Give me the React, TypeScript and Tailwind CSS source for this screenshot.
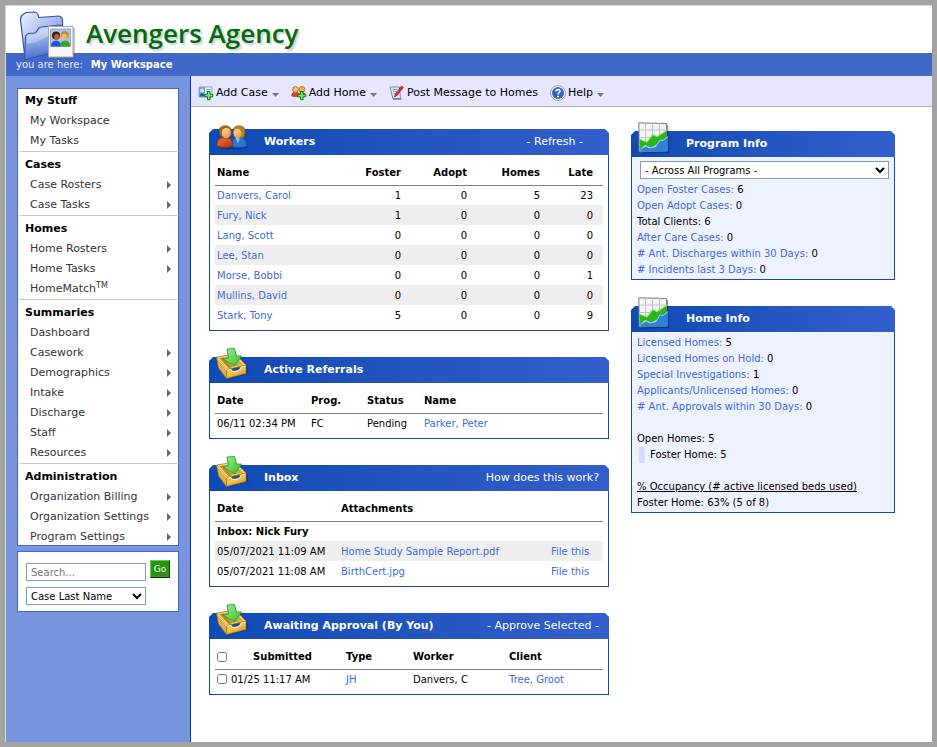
import { useState, type ReactNode } from "react";

const menu = [
  {
    title: "My Stuff",
    items: [{ label: "My Workspace" }, { label: "My Tasks" }],
  },
  {
    title: "Cases",
    items: [
      { label: "Case Rosters", sub: true },
      { label: "Case Tasks", sub: true },
    ],
  },
  {
    title: "Homes",
    items: [
      { label: "Home Rosters", sub: true },
      { label: "Home Tasks", sub: true },
      { label: "HomeMatch", tm: true },
    ],
  },
  {
    title: "Summaries",
    items: [
      { label: "Dashboard" },
      { label: "Casework", sub: true },
      { label: "Demographics", sub: true },
      { label: "Intake", sub: true },
      { label: "Discharge", sub: true },
      { label: "Staff", sub: true },
      { label: "Resources", sub: true },
    ],
  },
  {
    title: "Administration",
    items: [
      { label: "Organization Billing", sub: true },
      { label: "Organization Settings", sub: true },
      { label: "Program Settings", sub: true },
    ],
  },
] as { title: string; items: { label: string; sub?: boolean; tm?: boolean }[] }[];

const workers: [string, number, number, number, number][] = [
  ["Danvers, Carol", 1, 0, 5, 23],
  ["Fury, Nick", 1, 0, 0, 0],
  ["Lang, Scott", 0, 0, 0, 0],
  ["Lee, Stan", 0, 0, 0, 0],
  ["Morse, Bobbi", 0, 0, 0, 1],
  ["Mullins, David", 0, 0, 0, 0],
  ["Stark, Tony", 5, 0, 0, 9],
];

function FolderLogo() {
  return (
    <svg width="60" height="52" viewBox="0 0 60 52" className="block">
      <defs>
        <linearGradient id="folderBack" x1="0" y1="0" x2="1" y2="1">
          <stop offset="0" stopColor="#eef3ff" />
          <stop offset="1" stopColor="#5f80d4" />
        </linearGradient>
        <linearGradient id="folderFront" x1="0.3" y1="0" x2="0.5" y2="1">
          <stop offset="0" stopColor="#cfdcfa" />
          <stop offset="0.5" stopColor="#85a2e6" />
          <stop offset="1" stopColor="#4067cc" />
        </linearGradient>
      </defs>
      <path
        d="M6 47 L1.500 9 Q1.500 5 4 3.500 L7 1.500 L16 1 Q18.500 1.200 20 6.500 L40 5 Q43.500 6 43.500 9 L44 40 Z"
        fill="url(#folderBack)"
        stroke="#3a4f9e"
        strokeWidth="1.200"
        strokeLinejoin="round"
      />
      <path
        d="M5.500 47 L6.500 26 Q7 22.800 9.500 22.500 L15.500 22 Q17.500 21.500 18.500 19 Q19.500 16.500 22 16 L41 14 Q43.500 14.500 43.500 17 L43.500 39 L9 48 Q6 49 5.500 47 Z"
        fill="url(#folderFront)"
        stroke="#3a55ad"
        strokeWidth="1.200"
        strokeLinejoin="round"
      />
      <path d="M8 33 Q24 31 38 18 L38 15.500 L22.500 17.500 L17.500 23.500 L8 24.500 Z" fill="#fff" opacity="0.3" />
      <path d="M31 17 H56 V48 H31 Z" fill="#555" opacity="0.35" />
      <path d="M29.500 15.500 H54 V46 H29.500 Z" fill="#f7f7f7" stroke="#a8a8a8" />
      <path d="M31.500 18 H51.500 V35.500 H31.500 Z" fill="#a9c6f2" stroke="#8d9bb5" strokeWidth="0.800" />
      <circle cx="37" cy="24.500" r="4" fill="#3b1d12" />
      <ellipse cx="37.700" cy="26" rx="2.600" ry="3" fill="#c4601f" />
      <path d="M32 35.500 Q32 29.500 37 29.500 Q42 29.500 42 35.500 Z" fill="#2456d6" />
      <circle cx="45.800" cy="24" r="3.900" fill="#c08d1c" />
      <ellipse cx="45.300" cy="25.800" rx="2.700" ry="3" fill="#f0b878" />
      <path d="M41 35.500 Q41 29.500 46 29.500 Q51.300 29.500 51.300 35.500 Z" fill="#38a822" />
    </svg>
  );
}

function PeopleIcon() {
  return (
    <svg width="32" height="25" viewBox="0 0 32 25" className="block">
      <defs>
        <linearGradient id="face" x1="0" y1="0" x2="0.6" y2="1">
          <stop offset="0" stopColor="#ffdca0" />
          <stop offset="1" stopColor="#e89a4e" />
        </linearGradient>
        <linearGradient id="redShirt" x1="0" y1="0" x2="1" y2="1">
          <stop offset="0" stopColor="#f4743f" />
          <stop offset="1" stopColor="#b92f10" />
        </linearGradient>
      </defs>
      <ellipse cx="17" cy="22" rx="15" ry="2.500" fill="#00194f" opacity="0.4" />
      <path d="M16 17 Q17 12.500 23 12.500 Q30.500 12.500 30.500 20 Q30.500 22.500 23 22.500 Q17 22.500 16 21 Z" fill="#2a78cc" stroke="#17519a" strokeWidth="0.800" />
      <path d="M19.500 13 L22 18.500 L24 13 Z" fill="#8fc0f0" />
      <path d="M17 7 Q17 0.800 23 0.800 Q29.500 1 29 7 Q29 12 26.500 13 Q19 14 17 7 Z" fill="#b5831f" stroke="#7d5a10" strokeWidth="0.700" />
      <ellipse cx="21.500" cy="8.500" rx="4" ry="4.700" fill="url(#face)" />
      <path d="M0.800 19.500 Q1 12.500 9 12.300 Q16.400 12.500 16.600 19.500 Q16.500 22.500 9 22.500 Q1 22.500 0.800 19.500 Z" fill="url(#redShirt)" stroke="#9c2d10" strokeWidth="0.800" />
      <path d="M3 7 Q3.200 0.800 9.500 0.700 Q15.500 1 15.500 7 Q15 13 10 13.300 Q4 13 3 7 Z" fill="#ad6420" stroke="#7d4610" strokeWidth="0.700" />
      <ellipse cx="10.300" cy="8" rx="4.500" ry="5.200" fill="url(#face)" />
    </svg>
  );
}

function InboxIcon() {
  return (
    <svg width="33" height="32" viewBox="0 0 33 32" className="block">
      <defs>
        <linearGradient id="tray" x1="0" y1="0" x2="0.6" y2="1">
          <stop offset="0" stopColor="#f3cd58" />
          <stop offset="0.6" stopColor="#efc654" />
          <stop offset="1" stopColor="#c8921e" />
        </linearGradient>
        <linearGradient id="arrowDown" x1="0" y1="0" x2="1" y2="1">
          <stop offset="0" stopColor="#a4f592" />
          <stop offset="1" stopColor="#2fbb2c" />
        </linearGradient>
      </defs>
      <path d="M11 31.500 L32.500 26 L31 17 L12 27 Z" fill="#00194f" opacity="0.4" />
      <path d="M0.500 9 L19 6 L30 17 L11 21.500 Z" fill="#f5d97c" stroke="#a37a1c" strokeWidth="0.700" strokeLinejoin="round" />
      <path d="M3.500 10 L18 7.500 L27 16.500 L12.500 20 Z" fill="#d8a838" />
      <path d="M3.500 10 L7 9.500 L16 19.200 L12.500 20 Z" fill="#b78a28" />
      <path d="M0.500 9 L11 21.500 L10.500 30.500 L2.500 20 Z" fill="#e0b040" stroke="#a37415" strokeWidth="0.700" strokeLinejoin="round" />
      <path d="M11 21.500 L15 20.500 Q16 23.500 19 22.800 L22 22 Q24 21.500 24.500 18.300 L30 17 L30 25.500 L10.500 30.500 Z" fill="url(#tray)" stroke="#a37415" strokeWidth="0.700" strokeLinejoin="round" />
      <path d="M1.500 10.500 L11.300 22.300 L14.500 21.500 Q16 24.300 19 23.700 L22.300 22.800 Q24.700 22 25.200 19 L29.500 18" fill="none" stroke="#fff2bd" strokeWidth="0.900" />
      <path d="M11 1 L18.500 0.600 L20.500 8 L25.500 8 L18.500 18 L7 11 L12.500 9.800 Z" fill="url(#arrowDown)" stroke="#2c9e30" strokeWidth="0.900" strokeLinejoin="round" />
    </svg>
  );
}

function ChartIcon() {
  return (
    <svg width="33" height="32" viewBox="0 0 33 32" className="block">
      <path d="M3 3 L30 3 L31.500 31 L3 31.500 Z" fill="#0a1c4c" opacity="0.45" />
      <path d="M0.800 0.800 L28.500 1.500 L28.500 29 L1.200 29.800 Z" fill="#f4f4f8" stroke="#77788a" />
      <path d="M7.500 1 V29 M14.500 1 V29 M21.500 1 V29 M1 8 H29 M1 15.500 H29 M1 22.500 H29" stroke="#bcbcca" strokeWidth="0.900" />
      <path d="M1.500 17 L9 20 L14.500 12.500 L19 14.500 L28.500 8.500 L28.800 20 L20 22 L13 26 L7 23 L2 28.500 Z" fill="#2fb51c" />
      <path d="M1.500 17 L9 20 L14.500 12.500 L19 14.500 L28.500 8.500" fill="none" stroke="#8bea6a" strokeWidth="1.300" />
      <path d="M2 29.500 L3 27 L8 24 L12 26 L18 24.500 L22 18 L25 18.500 L30 14.500 L30 29.500 Z" fill="#2f80da" />
      <path d="M3 27 L8 24 L12 26 L18 24.500 L22 18 L25 18.500 L30 14.500" fill="none" stroke="#9cd0ff" strokeWidth="1" />
    </svg>
  );
}

function Plus() {
  return <path d="M9.500 6.500 h2.500 v2.800 h2.800 v2.500 h-2.800 v2.900 h-2.500 v-2.900 h-2.800 v-2.500 h2.800 Z" fill="#7ee86c" stroke="#0b7a12" strokeWidth="1" />;
}

function AddCaseIcon() {
  return (
    <svg width="16" height="16" viewBox="0 0 16 16">
      <path d="M1 2 H14 V12 H1 Z" fill="#eaf5ff" stroke="#7ea9cf" />
      <path d="M1 2 H7 V12 H1 Z" fill="#5aaae8" />
      <circle cx="4" cy="5.500" r="2" fill="#ffd7a0" />
      <path d="M1.500 11.500 Q2 8 4 8 Q6 8 6.500 11.500 Z" fill="#1b5cab" />
      <path d="M8.500 4.500 H12.500 M8.500 6.500 H12" stroke="#7ea9cf" />
      <Plus />
    </svg>
  );
}

function AddHomeIcon() {
  return (
    <svg width="16" height="16" viewBox="0 0 16 16">
      <path d="M7 11.500 Q8 7 11 7 Q14.500 7.500 14.500 11.500 Z" fill="#e8762b" stroke="#b5561d" strokeWidth="0.600" />
      <circle cx="11" cy="4.500" r="2.900" fill="#f3b166" stroke="#b8701b" strokeWidth="0.900" />
      <path d="M0.500 11 Q0.800 7 4.500 7 Q8.500 7 8.500 11 Q5 12.500 0.500 11 Z" fill="#dd4a22" stroke="#a83412" strokeWidth="0.600" />
      <circle cx="4.500" cy="4.500" r="2.900" fill="#f8bd7c" stroke="#c0661d" strokeWidth="0.900" />
      <Plus />
    </svg>
  );
}

function PostIcon() {
  return (
    <svg width="16" height="16" viewBox="0 0 16 16">
      <path d="M1 2 L10.500 2 L11.500 13.500 L4 14 Z" fill="#dbe8f5" stroke="#6c8db0" />
      <path d="M3.500 4.500 H8.500 M4 6.500 H8 M4.500 8.500 H7" stroke="#7f9fc0" strokeWidth="0.900" />
      <path d="M12.500 1 L14.500 2.500 L8 10.500 L5.500 12 L6.300 9.300 Z" fill="#e8321e" stroke="#8e1b10" strokeWidth="0.600" />
      <path d="M4 14 H12.500" stroke="#44627f" />
    </svg>
  );
}

function HelpIcon() {
  return (
    <svg width="16" height="16" viewBox="0 0 16 16">
      <circle cx="8" cy="8" r="7.400" fill="#fff" stroke="#8795b0" strokeWidth="0.900" />
      <circle cx="8" cy="8" r="6" fill="#2f62c9" />
      <path d="M5.900 6.500 Q6 4.400 8.100 4.400 Q10.200 4.500 10.100 6.200 Q10 7.300 8.700 8 Q8 8.500 8 9.500" fill="none" stroke="#fff" strokeWidth="1.500" />
      <circle cx="8" cy="11.600" r="1" fill="#fff" />
    </svg>
  );
}

function ToolbarButton({ icon, label, menu }: { icon: ReactNode; label: string; menu?: boolean }) {
  return (
    <button className="flex items-center gap-0.5">
      {icon}
      <span className="pt-0.5">{label}</span>
      {menu && (
        <svg width="7" height="4" viewBox="0 0 7 4" className="mt-1 ml-0.5">
          <path d="M0 0 H7 L3.500 4 Z" fill="#777" />
        </svg>
      )}
    </button>
  );
}

function A({ children }: { children: ReactNode }) {
  return (
    <a href="#" className="text-[#4169e1]">
      {children}
    </a>
  );
}

function Panel({
  title,
  icon,
  action,
  children,
}: {
  title: string;
  icon: ReactNode;
  action?: ReactNode;
  children: ReactNode;
}) {
  return (
    <section className="relative">
      <div className="flex h-[26px] items-center justify-between bg-linear-to-r from-[#0f4ab4] to-[#325fcc] pt-px pl-[55px] pr-[10px] text-[11px] text-white [clip-path:polygon(0_4px,4px_0,calc(100%-4px)_0,100%_4px,100%_100%,0_100%)]">
        <h2 className="font-bold">{title}</h2>
        {action}
      </div>
      <div className="absolute -top-[9px] left-[7px]">{icon}</div>
      {children}
    </section>
  );
}

const tableBox = "border border-t-0 border-[#0f4ab4] px-[5px] pt-[6px] pb-[5px]";
const table =
  "w-full table-fixed border-collapse text-left [&_td]:h-5 [&_td]:px-0.5 [&_td]:py-0 [&_th]:h-6 [&_th]:px-0.5 [&_th]:py-0 [&_thead]:border-b [&_thead]:border-[#808080]";
const infoBox = "border border-t-0 border-[#0f4ab4] bg-[#eef2fe] px-[5px] pt-[3px] pb-px leading-4";

function Sidebar() {
  return (
    <aside className="w-[185px] shrink-0 border-r border-[#0b319c] bg-[#7695de] px-[11px] pt-3">
      <nav className="border border-[#4169ca] bg-white px-px">
        {menu.map((section) => (
          <div
            key={section.title}
            className="border-b border-[#ccc] pt-[3px] text-[11px] leading-5 first:pt-0.5 last:-mb-0.5 last:border-b-0"
          >
            <h3 className="pl-[6px] font-bold">{section.title}</h3>
            <ul>
              {section.items.map((item) => (
                <li key={item.label}>
                  <a href="#" className="flex h-5 items-center justify-between pl-[11px] pr-[6px] text-[#333]">
                    <span>
                      {item.label}
                      {item.tm && <sup className="text-[8px] leading-none">TM</sup>}
                    </span>
                    {item.sub && (
                      <svg width="4" height="8" viewBox="0 0 4 8">
                        <path d="M0 0 L4 4 L0 8 Z" fill="#666" />
                      </svg>
                    )}
                  </a>
                </li>
              ))}
            </ul>
          </div>
        ))}
      </nav>
      <form
        className="mt-[5px] border border-[#4169ca] bg-white px-2 pt-2 pb-[6px] text-[10px]"
        onSubmit={(e) => e.preventDefault()}
      >
        <div className="flex items-start gap-1">
          <input
            type="text"
            aria-label="Search"
            placeholder="Search..."
            className="mt-[3px] h-[18px] w-[120px] border border-[#7f9db9] px-1 placeholder:text-[#757575]"
          />
          <button className="h-[18px] w-[21px] border border-t-[#5fd04a] border-l-[#5fd04a] border-r-[#073d00] border-b-[#073d00] bg-[#2b9212] text-[9px] leading-none text-white">
            Go
          </button>
        </div>
        <select aria-label="Search by" className="mt-[6px] block h-[18px] w-[120px] border border-[#7f9db9] bg-white">
          <option>Case Last Name</option>
          <option>Case First Name</option>
        </select>
      </form>
    </aside>
  );
}

function Workers() {
  return (
    <Panel
      title="Workers"
      icon={<div className="pt-[5px]"><PeopleIcon /></div>}
      action={<a href="#" className="pr-4">- Refresh -</a>}
    >
      <div className={tableBox}>
        <table className={table}>
          <colgroup>
            <col />
            <col className="w-[60px]" />
            <col className="w-[66px]" />
            <col className="w-[73px]" />
            <col className="w-[61px]" />
          </colgroup>
          <thead>
            <tr>
              <th>Name</th>
              <th className="text-right">Foster</th>
              <th className="text-right">Adopt</th>
              <th className="text-right">Homes</th>
              <th className="text-right">
                <span className="pr-2">Late</span>
              </th>
            </tr>
          </thead>
          <tbody>
            {workers.map(([name, foster, adopt, homes, late]) => (
              <tr key={name} className="even:bg-[#eee]">
                <td>
                  <A>{name}</A>
                </td>
                <td className="text-right">{foster}</td>
                <td className="text-right">{adopt}</td>
                <td className="text-right">{homes}</td>
                <td className="text-right">
                  <span className="pr-2">{late}</span>
                </td>
              </tr>
            ))}
          </tbody>
        </table>
      </div>
    </Panel>
  );
}

function Referrals() {
  return (
    <Panel title="Active Referrals" icon={<InboxIcon />}>
      <div className={tableBox}>
        <table className={table}>
          <colgroup>
            <col className="w-[94px]" />
            <col className="w-[56px]" />
            <col className="w-[57px]" />
            <col />
          </colgroup>
          <thead>
            <tr>
              <th>Date</th>
              <th>Prog.</th>
              <th>Status</th>
              <th>Name</th>
            </tr>
          </thead>
          <tbody>
            <tr>
              <td className="whitespace-nowrap">06/11 02:34 PM</td>
              <td>FC</td>
              <td>Pending</td>
              <td>
                <A>Parker, Peter</A>
              </td>
            </tr>
          </tbody>
        </table>
      </div>
    </Panel>
  );
}

function Inbox() {
  return (
    <Panel title="Inbox" icon={<InboxIcon />} action={<a href="#">How does this work?</a>}>
      <div className={tableBox}>
        <table className={table}>
          <colgroup>
            <col className="w-[124px]" />
            <col />
            <col className="w-[54px]" />
          </colgroup>
          <thead>
            <tr>
              <th>Date</th>
              <th>Attachments</th>
              <th></th>
            </tr>
          </thead>
          <tbody>
            <tr>
              <td colSpan={3} className="font-bold">
                Inbox: Nick Fury
              </td>
            </tr>
            <tr className="bg-[#eee]">
              <td className="whitespace-nowrap">05/07/2021 11:09 AM</td>
              <td>
                <A>Home Study Sample Report.pdf</A>
              </td>
              <td>
                <A>File this</A>
              </td>
            </tr>
            <tr>
              <td className="whitespace-nowrap">05/07/2021 11:08 AM</td>
              <td>
                <A>BirthCert.jpg</A>
              </td>
              <td>
                <A>File this</A>
              </td>
            </tr>
          </tbody>
        </table>
      </div>
    </Panel>
  );
}

function Approvals() {
  const [checked, setChecked] = useState(false);
  return (
    <Panel
      title="Awaiting Approval (By You)"
      icon={<InboxIcon />}
      action={<a href="#">- Approve Selected -</a>}
    >
      <div className={tableBox}>
        <table className={table}>
          <colgroup>
            <col className="w-[14px]" />
            <col className="w-[115px]" />
            <col className="w-[67px]" />
            <col className="w-[96px]" />
            <col />
          </colgroup>
          <thead>
            <tr>
              <th>
                <input
                  type="checkbox"
                  aria-label="Select all"
                  className="block size-[10px]"
                  checked={checked}
                  onChange={() => setChecked(!checked)}
                />
              </th>
              <th>
                <span className="block pr-2 text-center">Submitted</span>
              </th>
              <th>Type</th>
              <th>Worker</th>
              <th>Client</th>
            </tr>
          </thead>
          <tbody>
            <tr>
              <td>
                <input
                  type="checkbox"
                  aria-label="Select Tree, Groot"
                  className="block size-[10px]"
                  checked={checked}
                  onChange={() => setChecked(!checked)}
                />
              </td>
              <td>01/25 11:17 AM</td>
              <td>
                <A>JH</A>
              </td>
              <td>Danvers, C</td>
              <td>
                <A>Tree, Groot</A>
              </td>
            </tr>
          </tbody>
        </table>
      </div>
    </Panel>
  );
}

function Stat({ label, value }: { label: string; value: number }) {
  return (
    <p>
      <A>{label}:</A> {value}
    </p>
  );
}

export default function App() {
  return (
    <div className="flex min-h-screen flex-col border-[5px] border-[#a3a3a3] bg-white font-['DejaVu_Sans',sans-serif] text-[10px] text-black">
      <div className="flex grow flex-col border-t border-l border-[#d8d8d8]">
        <header className="relative">
          <div className="flex h-[47px] items-center pl-20">
            <h1 className="pt-[7px] font-['Open_Sans',sans-serif] text-[26px] leading-none font-semibold text-[#006b0c] [text-shadow:2px_2px_2px_#ccc]">
              Avengers Agency
            </h1>
          </div>
          <div className="flex h-[23px] items-center gap-2 bg-[#4169ca] pl-[10px] text-white">
            <span className="text-[#e6e6ff]">you are here:</span>
            <span className="font-bold">My Workspace</span>
          </div>
          <div className="absolute top-[5px] left-[13px]">
            <FolderLogo />
          </div>
        </header>
        <div className="flex grow">
          <Sidebar />
          <main className="min-w-0 grow">
            <div className="flex h-[31px] items-center gap-3 border-b border-[#b3b3b3] bg-[#e6e6ff] pt-1 pb-px pl-[7px] text-[11px]">
              <ToolbarButton icon={<AddCaseIcon />} label="Add Case" menu />
              <ToolbarButton icon={<AddHomeIcon />} label="Add Home" menu />
              <ToolbarButton icon={<PostIcon />} label="Post Message to Homes" />
              <ToolbarButton icon={<HelpIcon />} label="Help" menu />
            </div>
            <div className="grid grid-cols-[minmax(0,400fr)_minmax(0,264fr)] items-start gap-x-[22px] pt-[22px] pr-[37px] pb-11 pl-[18px]">
              <div className="flex flex-col gap-[26px]">
                <Workers />
                <Referrals />
                <Inbox />
                <Approvals />
              </div>
              <div className="flex flex-col gap-[26px] pt-0.5">
                <Panel title="Program Info" icon={<ChartIcon />}>
                  <div className={infoBox}>
                    <select
                      aria-label="Program"
                      className="mt-px mb-[3px] ml-[3px] block h-[18px] w-[calc(100%-3px)] border border-[#7f9db9] bg-white"
                    >
                      <option>- Across All Programs -</option>
                    </select>
                    <Stat label="Open Foster Cases" value={6} />
                    <Stat label="Open Adopt Cases" value={0} />
                    <p>Total Clients: 6</p>
                    <Stat label="After Care Cases" value={0} />
                    <Stat label="# Ant. Discharges within 30 Days" value={0} />
                    <Stat label="# Incidents last 3 Days" value={0} />
                  </div>
                </Panel>
                <Panel title="Home Info" icon={<ChartIcon />}>
                  <div className={infoBox}>
                    <Stat label="Licensed Homes" value={5} />
                    <Stat label="Licensed Homes on Hold" value={0} />
                    <Stat label="Special Investigations" value={1} />
                    <Stat label="Applicants/Unlicensed Homes" value={0} />
                    <Stat label="# Ant. Approvals within 30 Days" value={0} />
                    <p className="mt-4">Open Homes: 5</p>
                    <p className="ml-0.5 border-l-[6px] border-[#d6dcfc] pl-[5px]">Foster Home: 5</p>
                    <p className="mt-4 underline">% Occupancy (# active licensed beds used)</p>
                    <p>Foster Home: 63% (5 of 8)</p>
                  </div>
                </Panel>
              </div>
            </div>
          </main>
        </div>
      </div>
    </div>
  );
}
